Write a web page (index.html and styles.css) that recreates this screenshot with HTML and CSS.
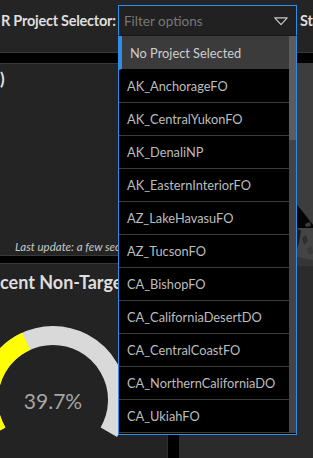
FILE: index.html
```html
<!DOCTYPE html>
<html>
<head>
<meta charset="utf-8">
<link rel="stylesheet" href="styles.css">
</head>
<body>
<header class="topbar">
  <span class="label">R Project Selector:</span>
  <div class="combo">
    <div class="combo-input">
      <span class="placeholder">Filter options</span>
      <svg class="caret" viewBox="0 0 14 9"><path d="M0.8 0.8 H13.2 L7 7.6 Z" fill="none" stroke="#c8c8c8" stroke-width="1.2" stroke-linejoin="round"/></svg>
    </div>
    <div class="combo-list">
      <div class="options">
        <div class="opt opt-selected">No Project Selected</div>
        <div class="opt">AK_AnchorageFO</div>
        <div class="opt">AK_CentralYukonFO</div>
        <div class="opt">AK_DenaliNP</div>
        <div class="opt">AK_EasternInteriorFO</div>
        <div class="opt">AZ_LakeHavasuFO</div>
        <div class="opt">AZ_TucsonFO</div>
        <div class="opt">CA_BishopFO</div>
        <div class="opt">CA_CaliforniaDesertDO</div>
        <div class="opt">CA_CentralCoastFO</div>
        <div class="opt">CA_NorthernCaliforniaDO</div>
        <div class="opt">CA_UkiahFO</div>
      </div>
      <div class="scrollbar"><div class="thumb"></div></div>
    </div>
  </div>
  <span class="label label-next">Status Selector:</span>
</header>
<main class="grid">
  <div class="col-left">
    <section class="panel panel-a">
      <div class="title">)</div>
      <div class="updated">Last update: a few seconds ago</div>
    </section>
    <section class="panel panel-b">
      <div class="title-b">cent Non-Target Species</div>
      <svg class="gauge" viewBox="0 0 168 165">
        <path d="M -2.86 139.25 A 64.5 64.5 0 1 1 108.86 139.25" fill="none" stroke="#d9d9d9" stroke-width="19"/>
        <path d="M -2.86 139.25 A 64.5 64.5 0 0 1 26.03 48.41" fill="none" stroke="#ffff00" stroke-width="19"/>
        <text x="53" y="116" text-anchor="middle" class="gauge-value">39.7%</text>
      </svg>
    </section>
  </div>
  <div class="col-right">
    <svg class="map" viewBox="0 0 134 395">
      <path d="M0 0 H134 V162 C130 157 125 150 118 142 H0 Z" fill="#3d3d3d"/>
      <path d="M0 142 H118 C125 150 130 157 134 162 V166 H0 Z" fill="#050505"/>
      <path d="M126 161 L131 159 L132 163 L127 164 Z" fill="#3d3d3d"/>
      <rect x="118" y="165" width="16" height="38" fill="#444444"/>
      <path d="M118 165 L122 168 L120 180 L118 186 Z" fill="#1c1c1c"/>
      <path d="M123 175 L127 172 L129 178 L125 182 Z" fill="#2e2e2e"/>
      <path d="M128 185 L133 183 L134 190 L130 192 Z" fill="#383838"/>
      <path d="M118 194 L134 197 V203 H118 Z" fill="#363636"/>
    </svg>
  </div>
</main>
</body>
</html>
```
FILE: styles.css
```css
* { box-sizing: border-box; margin: 0; padding: 0; }
html, body { width: 313px; height: 458px; overflow: hidden; background: #000; }
body { font-family: Lato, "Open Sans", sans-serif; color: #dddddd; }

.topbar {
  height: 53px;
  background: #242424;
  border-bottom: 1px solid #3a3a3a;
  display: flex;
  align-items: flex-start;
  white-space: nowrap;
  position: relative;
  z-index: 2;
}
.label {
  flex: 0 0 118px;
  min-width: 0;
  overflow: hidden;
  padding: 12px 0 0 1px;
  font-weight: 700;
  font-size: 14.5px;
  letter-spacing: -0.25px;
  line-height: 18px;
  color: #dedede;
}
.label-next { flex: 0 0 auto; padding-left: 3px; overflow: visible; }

.combo { flex: 0 0 179px; margin-top: 5px; position: relative; }
.combo-input {
  height: 31px;
  border: 1px solid #2d8fe9;
  border-bottom-color: #141414;
  background: #212121;
  display: flex;
  align-items: center;
  justify-content: space-between;
  padding: 0 8px 0 5px;
}
.placeholder { font-size: 13.5px; color: #787878; }
.caret { width: 14px; height: 9px; margin-top: 2px; }

.combo-list {
  position: absolute;
  top: 100%;
  left: 0;
  width: 179px;
  border: 1px solid #2d8fe9;
  border-top: none;
  padding-bottom: 1px;
  background: #000;
  display: flex;
}
.options { flex: 1; }
.opt {
  height: 33px;
  border-bottom: 1px solid #3c3c3c;
  padding-left: 8px;
  display: flex;
  align-items: center;
  font-size: 12.8px;
  color: #bdbdbd;
}
.opt-selected {
  height: 34px;
  background: #3b3b3b;
  border-left: 3px solid #2d8fe9;
  border-bottom-color: #000;
  color: #cfcfcf;
}
.scrollbar { width: 7px; background: #434343; }
.thumb { height: 104px; background: #5c5c5c; }

.grid {
  display: grid;
  grid-template-columns: 168px 1fr;
  column-gap: 11px;
  padding-top: 10px;
  height: 405px;
}
.col-left { display: flex; flex-direction: column; gap: 7px; min-width: 0; }
.panel {
  background: #242424;
  border-top: 1px solid #393939;
  border-right: 1px solid #2e2e2e;
  overflow: hidden;
  white-space: nowrap;
}
.panel-a {
  height: 193px;
  flex: 0 0 193px;
  border-bottom: 1px solid #393939;
  display: flex;
  flex-direction: column;
  justify-content: space-between;
  padding: 5px 0 2px 0;
}
.title { font-weight: 700; font-size: 17px; line-height: 20px; color: #e0e0e0; }
.updated { font-style: italic; font-size: 11.5px; line-height: 13px; color: #c8c8c8; padding-left: 15px; }
.panel-b { flex: 1; background: #232323; padding-top: 7px; }
.title-b { font-weight: 700; font-size: 18px; line-height: 22px; color: #dedede; }
.gauge { display: block; width: 168px; height: 165px; }
.gauge-value { font-family: Lato, sans-serif; font-size: 21px; fill: #a6a6a6; }

.col-right { background: #2b2b2b; overflow: hidden; }
.map { display: block; width: 134px; height: 395px; }
```
